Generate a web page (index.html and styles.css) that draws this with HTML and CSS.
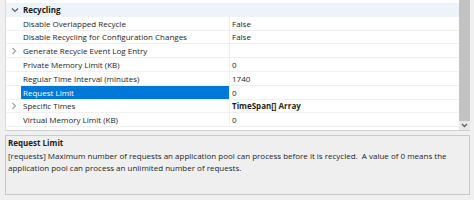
FILE: index.html
```html
<!DOCTYPE html>
<html>
<head>
<meta charset="utf-8">
<link rel="stylesheet" href="styles.css">
</head>
<body>
<div class="grid">
  <div class="rows">
    <div class="row cat">
      <div class="gutter"><svg class="chev" width="8" height="6" viewBox="0 0 8 6"><polyline points="1,1.5 4,4.5 7,1.5" fill="none" stroke="#5a5a5a" stroke-width="1.1"/></svg></div>
      <div class="cat-name">Recycling</div>
    </div>
    <div class="row"><div class="gutter"></div><div class="name">Disable Overlapped Recycle</div><div class="value">False</div></div>
    <div class="row"><div class="gutter"></div><div class="name">Disable Recycling for Configuration Changes</div><div class="value">False</div></div>
    <div class="row"><div class="gutter"><svg class="exp" width="6" height="8" viewBox="0 0 6 8"><polyline points="1.5,1 4.5,4 1.5,7" fill="none" stroke="#a0a0a0" stroke-width="1.1"/></svg></div><div class="name">Generate Recycle Event Log Entry</div><div class="value"></div></div>
    <div class="row"><div class="gutter"></div><div class="name">Private Memory Limit (KB)</div><div class="value">0</div></div>
    <div class="row"><div class="gutter"></div><div class="name">Regular Time Interval (minutes)</div><div class="value">1740</div></div>
    <div class="row"><div class="gutter"></div><div class="name selected">Request Limit</div><div class="value">0</div></div>
    <div class="row"><div class="gutter"><svg class="exp" width="6" height="8" viewBox="0 0 6 8"><polyline points="1.5,1 4.5,4 1.5,7" fill="none" stroke="#a0a0a0" stroke-width="1.1"/></svg></div><div class="name">Specific Times</div><div class="value bold">TimeSpan[] Array</div></div>
    <div class="row last"><div class="gutter"></div><div class="name">Virtual Memory Limit (KB)</div><div class="value">0</div></div>
  </div>
  <div class="scrollbar">
    <div class="thumb"></div>
    <div class="arrow"><svg width="7" height="5" viewBox="0 0 7 5"><polyline points="1,1 3.5,3.5 6,1" fill="none" stroke="#606060" stroke-width="1.3"/></svg></div>
  </div>
</div>
<div class="desc">
  <div class="desc-title">Request Limit</div>
  <div class="desc-text">[requests] Maximum number of requests an application pool can process before it is recycled.&nbsp; A value of 0 means the application pool can process an unlimited number of requests.</div>
</div>
</body>
</html>
```

FILE: styles.css
```css
html, body {
  margin: 0;
  padding: 0;
}
body {
  width: 474px;
  height: 200px;
  background: #f0f0f0;
  font-family: "Open Sans", "Liberation Sans", sans-serif;
  font-size: 8px;
  color: #1e1e1e;
  overflow: hidden;
}
.grid {
  margin-left: 5px;
  width: 465px;
  height: 131px;
  display: flex;
  background: #ffffff;
  border-left: 1px solid #dcdcdc;
  border-bottom: 1px solid #d0d0d0;
  box-sizing: border-box;
}
.rows {
  flex: 1;
  padding-top: 3px;
  display: flex;
  flex-direction: column;
}
.row {
  height: 13.8px;
  display: flex;
  align-items: stretch;
  box-sizing: border-box;
  border-bottom: 1px solid #f0f0f0;
}
.cat {
  background: #eef2f9;
  border-bottom: none;
}
.gutter {
  width: 15px;
  flex: none;
  display: flex;
  align-items: center;
  justify-content: center;
}
.chev {
  margin-left: 2px;
}
.exp {
  margin-left: 1px;
}
.cat-name {
  font-weight: bold;
  padding-left: 2px;
  display: flex;
  align-items: center;
  color: #1a1a1a;
}
.name {
  width: 209px;
  flex: none;
  padding-left: 2px;
  box-sizing: border-box;
  display: flex;
  align-items: center;
  border-right: 1px solid #f0f0f0;
  white-space: nowrap;
}
.name.selected {
  background: #0078d7;
  color: #ffffff;
}
.value {
  flex: 1;
  padding-left: 2px;
  display: flex;
  align-items: center;
  white-space: nowrap;
}
.bold {
  font-weight: bold;
}
.scrollbar {
  width: 11px;
  flex: none;
  display: flex;
  flex-direction: column;
  background: #e8e8e8;
}
.thumb {
  height: 121px;
  background: #c2c2c2;
}
.arrow {
  flex: 1;
  display: flex;
  align-items: center;
  justify-content: center;
  background: #e8e8e8;
}
.desc {
  margin: 4px 0 0 5px;
  width: 465px;
  height: 60px;
  box-sizing: border-box;
  border: 1px solid #c8c8c8;
  background: #efefef;
  padding: 0 3px 0 2px;
}
.desc-title {
  font-weight: bold;
  line-height: 14px;
}
.desc-text {
  line-height: 12px;
}
```
